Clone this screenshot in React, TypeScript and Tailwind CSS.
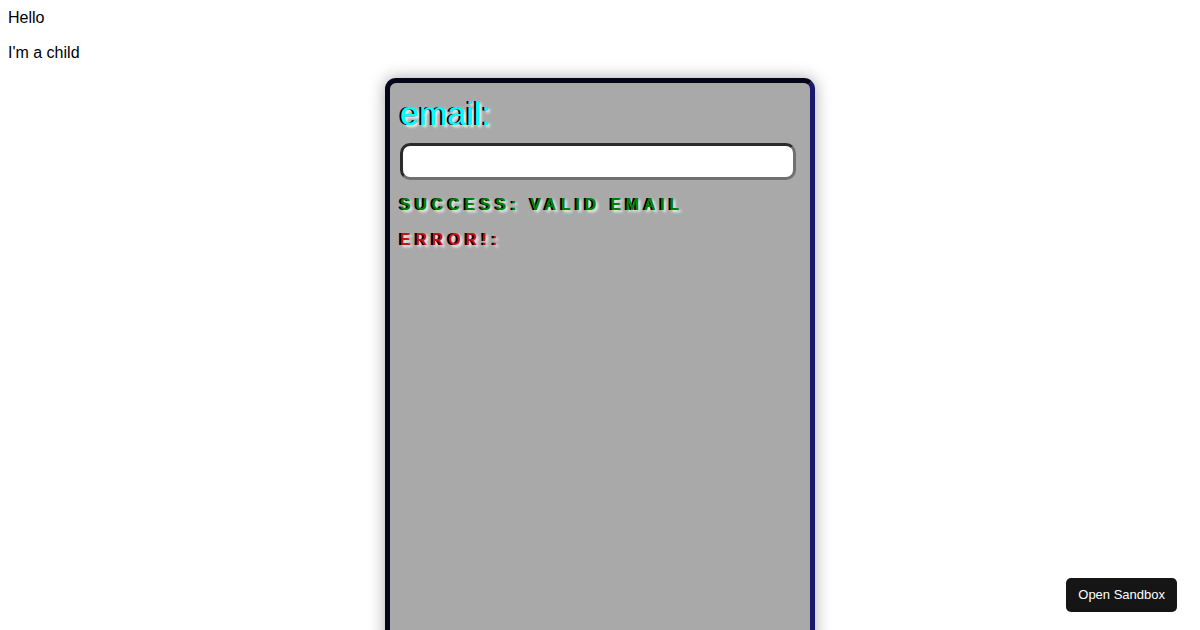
import React from "react";

// form card with email field and status messages
export default function App() {
	return (
		<div className="min-h-[630px] bg-white px-2 pb-2 pt-[9px] font-['Liberation_Sans',Arial,sans-serif] text-base text-black">
			<p className="leading-[1.15]">Hello</p>
			<p className="mt-[17px] leading-[1.15]">I'm a child</p>

			<div className="mx-auto mt-[15px] h-[600px] w-[430px] rounded-[11px] border-[5px] border-solid border-t-[#05051a] border-l-[#05051a] border-r-[#191970] border-b-[#191970] bg-[#a9a9a9] px-[10px] pt-[11px] shadow-[0_0_16px_rgba(0,0,0,0.35)]">
				<label
					htmlFor="email"
					className="block text-[34px] leading-[38px] text-[#00ffff] [text-shadow:-2px_0_0_#000,2px_2px_3px_#fff]"
				>
					email:
				</label>
				<input
					id="email"
					type="text"
					className="mt-[11px] block h-[37px] w-[396px] rounded-[10px] border-[3px] border-solid border-t-[#2b2b2b] border-l-[#2b2b2b] border-r-[#707070] border-b-[#707070] bg-white px-2 text-base outline-none"
				/>
				<p className="mt-4 text-base font-bold leading-[18px] tracking-[0.3em] text-[#008000] [text-shadow:-2px_0_0_#000,2px_2px_3px_#fff]">
					SUCCESS: VALID EMAIL
				</p>
				<p className="mt-[17px] text-base font-bold leading-[18px] tracking-[0.3em] text-[#cc1111] [text-shadow:-2px_0_0_#000,2px_2px_3px_#fff]">
					ERROR!:
				</p>
			</div>

			<button className="fixed bottom-[18px] right-[23px] h-[34px] rounded-[5px] bg-[#151515] px-3 text-[13px] text-white">
				Open Sandbox
			</button>
		</div>
	);
}
